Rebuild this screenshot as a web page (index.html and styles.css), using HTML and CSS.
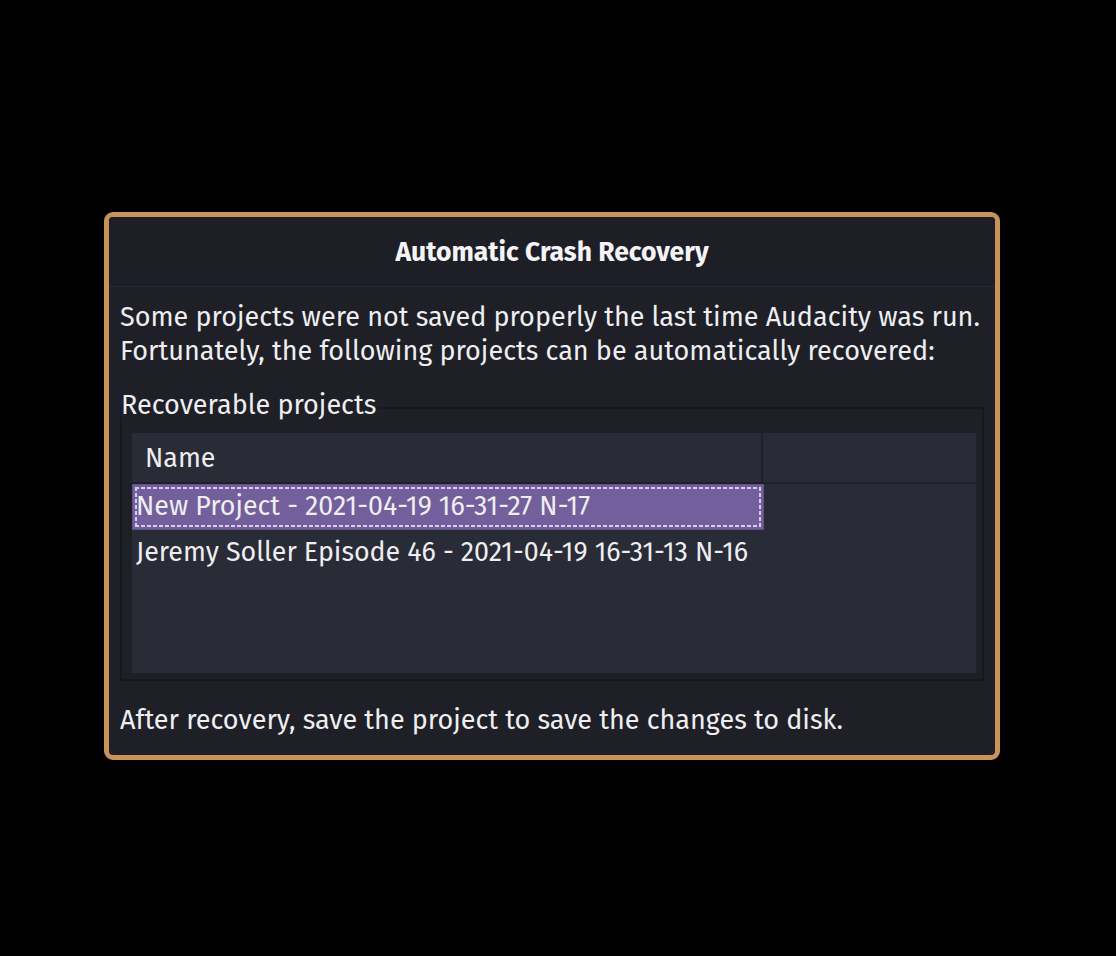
FILE: index.html
```html
<!DOCTYPE html>
<html>
<head>
<meta charset="utf-8">
<link rel="stylesheet" href="styles.css">
</head>
<body>
<div class="window">
  <div class="titlebar">Automatic Crash Recovery</div>
  <div class="content">
    <p class="intro">Some projects were not saved properly the last time Audacity was run.<br>Fortunately, the following projects can be automatically recovered:</p>
    <div class="group-label"><span>Recoverable projects</span></div>
    <div class="group">
      <div class="list">
        <div class="list-header">
          <div class="col-name">Name</div>
          <div class="col-rest"></div>
        </div>
        <div class="row selected">New Project - 2021-04-19 16-31-27 N-17</div>
        <div class="row">Jeremy Soller Episode 46 - 2021-04-19 16-31-13 N-16</div>
      </div>
    </div>
    <p class="outro">After recovery, save the project to save the changes to disk.</p>
  </div>
</div>
</body>
</html>
```

FILE: styles.css
```css
html, body {
  margin: 0;
  padding: 0;
  background: #000;
}
body {
  padding: 212px 0 0 104px;
  font-family: "Fira Sans", "Open Sans", "Noto Sans", sans-serif;
  color: #eeeef0;
}
.window {
  box-sizing: border-box;
  width: 896px;
  height: 548px;
  border: 5px solid #c8935a;
  border-radius: 9px;
  background: #1e1f27;
  overflow: hidden;
}
.titlebar {
  height: 70px;
  box-sizing: border-box;
  border-bottom: 1px solid #262730;
  background: #1d1e26;
  display: flex;
  align-items: center;
  justify-content: center;
  font-weight: 700;
  font-size: 26.5px;
  color: #f4f4f6;
}
.content {
  padding: 0 11px;
}
.intro {
  margin: 13px 0 0 0;
  font-size: 27px;
  line-height: 34px;
  white-space: nowrap;
}
.group-label {
  margin-top: 20px;
  font-size: 27px;
  line-height: 34px;
  height: 34px;
  padding-left: 1px;
}
.group-label span {
  display: inline-block;
  background: #1e1f27;
  padding-right: 2px;
}
.group {
  margin-top: -15px;
  height: 274px;
  box-sizing: border-box;
  border: 2px solid #17181e;
  padding: 24px 6px 6px 10px;
}
.list {
  height: 240px;
  background: #292b36;
  font-size: 26.8px;
}
.list-header {
  display: flex;
  height: 51px;
  box-sizing: border-box;
  border-bottom: 2px solid #1f2029;
}
.col-name {
  width: 631px;
  box-sizing: border-box;
  border-right: 2px solid #1f2029;
  padding-left: 13px;
  line-height: 50px;
}
.col-rest {
  flex: 1;
}
.row {
  height: 46px;
  line-height: 44px;
  padding-left: 4px;
  width: 632px;
  box-sizing: border-box;
  white-space: nowrap;
}
.row.selected {
  position: relative;
  background: #735f9b;
  box-shadow: inset 0 0 0 1px #5f4f82;
}
.row.selected::after {
  content: "";
  position: absolute;
  left: 3px;
  top: 3px;
  right: 3px;
  bottom: 3px;
  background:
    repeating-linear-gradient(90deg, #d8cbef 0 4px, transparent 4px 6px) top left / 100% 2px no-repeat,
    repeating-linear-gradient(90deg, #d8cbef 0 4px, transparent 4px 6px) bottom left / 100% 2px no-repeat,
    repeating-linear-gradient(180deg, #d8cbef 0 4px, transparent 4px 6px) top left / 2px 100% no-repeat,
    repeating-linear-gradient(180deg, #d8cbef 0 4px, transparent 4px 6px) top right / 2px 100% no-repeat;
}
.outro {
  margin: 22px 0 0 0;
  font-size: 27px;
  line-height: 34px;
}
```
